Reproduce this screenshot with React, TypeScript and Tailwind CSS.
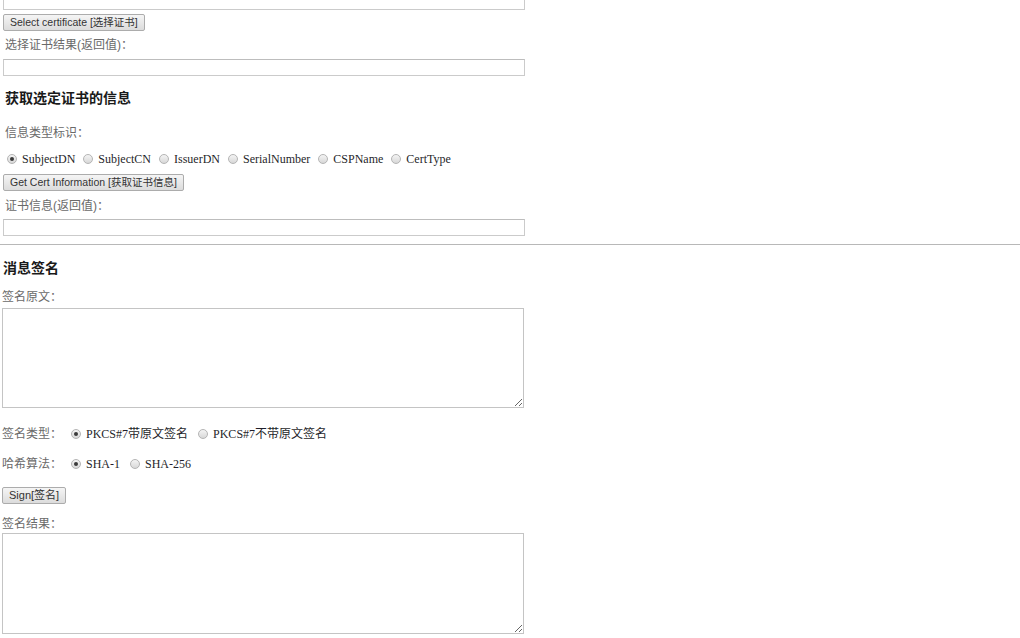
import React from "react";

const sans = "font-['Liberation_Sans','Noto_Sans_CJK_SC',sans-serif]";
const serif = "font-['Liberation_Serif','Noto_Sans_CJK_SC',serif]";

const Radio = ({ checked = false }: { checked?: boolean }) => (
  <span className="flex h-[10px] w-[10px] shrink-0 items-center justify-center rounded-full border border-[#b4b4b4] bg-gradient-to-b from-[#f4f4f4] to-[#d8d8d8]">
    {checked && <span className="h-[4px] w-[4px] rounded-full bg-[#3a3a3a]" />}
  </span>
);

const Option = ({ label, checked }: { label: string; checked?: boolean }) => (
  <span className="flex items-center gap-[5px]">
    <Radio checked={checked} />
    <span className={`${serif} text-[12px] text-[#1f1f2a]`}>{label}</span>
  </span>
);

const Button = ({ children, className = "" }: { children: React.ReactNode; className?: string }) => (
  <button
    type="button"
    className={`${sans} block h-[17px] w-fit whitespace-nowrap rounded-[2px] border border-[#acacac] bg-gradient-to-b from-[#f5f5f5] to-[#dcdcdc] px-[6px] text-[10.5px] leading-[15px] text-[#333] ${className}`}
  >
    {children}
  </button>
);

const Label = ({ children, className = "" }: { children: React.ReactNode; className?: string }) => (
  <div className={`${sans} text-[12px] leading-[16px] text-[#6a6a6a] ${className}`}>{children}</div>
);

const TextInput = ({ className = "" }: { className?: string }) => (
  <input
    type="text"
    className={`block h-[17px] w-[522px] border border-[#cbcbcb] border-t-[#bdbdbd] bg-white ${className}`}
  />
);

export default function App() {
  return (
    <div className="h-[638px] w-[1020px] overflow-hidden bg-white">
      {/* 选择证书 */}
      <TextInput className="-mt-[7px] ml-[3px]" />
      <Button className="mt-[4px] ml-[3px]">Select certificate [选择证书]</Button>
      <Label className="mt-[6px] ml-[5px]">选择证书结果(返回值)：</Label>
      <TextInput className="mt-[6px] ml-[3px]" />

      {/* 获取选定证书的信息 */}
      <h3 className={`${serif} mt-[14px] ml-[5px] text-[14px] font-bold leading-[18px] text-[#1a1a1a]`}>
        获取选定证书的信息
      </h3>
      <Label className="mt-[17px] ml-[5px]">信息类型标识：</Label>
      <div className="mt-[10px] ml-[7px] flex h-[16px] items-center gap-[8px]">
        <Option label="SubjectDN" checked />
        <Option label="SubjectCN" />
        <Option label="IssuerDN" />
        <Option label="SerialNumber" />
        <Option label="CSPName" />
        <Option label="CertType" />
      </div>
      <Button className="mt-[7px] ml-[3px]">Get Cert Information [获取证书信息]</Button>
      <Label className="mt-[7px] ml-[5px]">证书信息(返回值)：</Label>
      <TextInput className="mt-[5px] ml-[3px]" />

      <hr className="mt-[8px] border-t border-[#b8b8b8]" />

      {/* 消息签名 */}
      <h3 className={`${serif} mt-[15px] ml-[3px] text-[14px] font-bold leading-[18px] text-[#1a1a1a]`}>
        消息签名
      </h3>
      <Label className="mt-[11px] ml-[2px]">签名原文：</Label>
      <textarea className="mt-[3px] ml-[2px] block h-[100px] w-[522px] border border-[#c4c4c4] bg-white" />

      <div className="mt-[18px] ml-[2px] flex h-[16px] items-center">
        <Label className="w-[69px]">签名类型：</Label>
        <div className="flex items-center gap-[10px]">
          <Option label="PKCS#7带原文签名" checked />
          <Option label="PKCS#7不带原文签名" />
        </div>
      </div>
      <div className="mt-[14px] ml-[2px] flex h-[16px] items-center">
        <Label className="w-[69px]">哈希算法：</Label>
        <div className="flex items-center gap-[10px]">
          <Option label="SHA-1" checked />
          <Option label="SHA-256" />
        </div>
      </div>

      <Button className="mt-[15px] ml-[2px] px-[5px] text-[11px]">Sign[签名]</Button>
      <Label className="mt-[12px] ml-[2px]">签名结果：</Label>
      <textarea className="mt-[1px] ml-[2px] block h-[101px] w-[522px] border border-[#c4c4c4] bg-white" />
    </div>
  );
}
